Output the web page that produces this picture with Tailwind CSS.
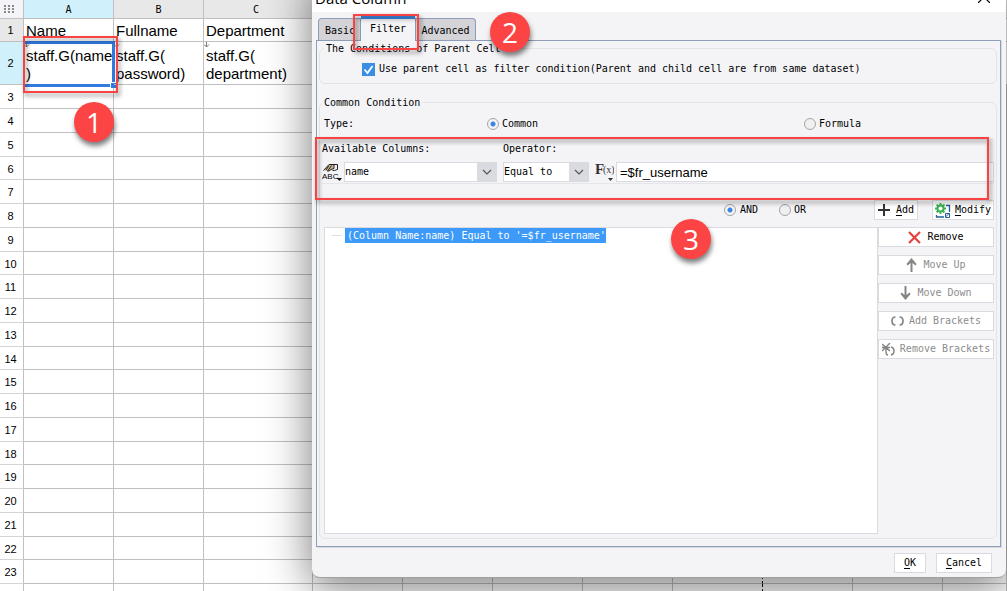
<!DOCTYPE html>
<html lang="en">
<head>
<meta charset="utf-8">
<title>Data Column</title>
<script src="https://cdn.jsdelivr.net/npm/@tailwindcss/browser@4"></script>
</head>
<body class="relative h-screen overflow-hidden bg-white text-black font-['DejaVu_Sans_Mono',monospace] text-[10px] leading-[14px]">

<!-- Spreadsheet -->
<table class="w-full table-fixed border-separate border-spacing-0">
  <colgroup>
    <col class="w-6"><col class="w-[90px]"><col class="w-[90px]"><col class="w-[109px]">
    <col class="w-[90px]"><col class="w-[90px]"><col class="w-[90px]"><col class="w-[90px]"><col class="w-[90px]"><col class="w-[90px]"><col class="w-[90px]"><col>
  </colgroup>
  <thead>
    <tr class="h-[19px] bg-[#e8e8e8]">
      <td class="border-r border-b border-[#c0c0c0] bg-[#f4f4f8] p-0">
        <svg class="ml-1 block" width="11" height="9" fill="#8a8a8a"><path d="M0 0h2v2H0zM4 0h2v2H4zM8 0h2v2H8zM0 3h2v2H0zM4 3h2v2H4zM8 3h2v2H8zM0 6h2v2H0zM4 6h2v2H4zM8 6h2v2H8z"/></svg>
      </td>
      <th class="border-r border-b border-[#c0c0c0] bg-[#d0f0fb] p-0 pt-0.5 font-normal">A</th>
      <th class="border-r border-b border-[#c0c0c0] p-0 pt-0.5 font-normal">B</th>
      <th class="border-r border-b border-[#c0c0c0] p-0 pt-0.5 pr-1 font-normal">C</th>
      <td colspan="8" class="border-b border-[#c0c0c0] p-0"></td>
    </tr>
  </thead>
  <tbody id="rows">
    <tr class="h-[23px] font-['Liberation_Sans',sans-serif] text-[15px] leading-[18px]">
      <th class="border-r border-b border-[#c0c0c0] bg-[#e8e8e8] p-0 pr-0.5 text-[11px] font-normal">1</th>
      <td class="border-r border-b border-[#c0c0c0] p-0 pt-0.5 pl-0.5">Name</td>
      <td class="border-r border-b border-[#c0c0c0] p-0 pt-0.5 pl-0.5">Fullname</td>
      <td class="border-r border-b border-[#c0c0c0] p-0 pt-0.5 pl-0.5">Department</td>
      <td colspan="8" class="border-b border-[#c0c0c0] p-0"></td>
    </tr>
    <tr class="h-[43px] font-['Liberation_Sans',sans-serif] text-[15px] leading-[18px]">
      <th class="border-r border-b border-[#c0c0c0] bg-[#d0f0fb] p-0 pr-0.5 text-[11px] font-normal">2</th>
      <td class="relative border-r border-b border-[#c0c0c0] p-0 pt-1 pl-0.5 whitespace-nowrap">staff.G(name<br>)
        <svg class="absolute top-0 left-0" width="6" height="6" fill="none" stroke="#777"><path d="M2.500 0v5M0 2.500l2.500 2.500l2.500-2.500"/></svg>
        <span class="absolute top-[-1px] -right-0.5 -bottom-[3px] left-0 border-y-[3px] border-r-[3px] border-[#2f7be0]"></span>
        <span class="absolute -right-[3px] -bottom-1 size-1.5 border-t border-l border-white bg-[#2f7be0]"></span>
      </td>
      <td class="relative border-r border-b border-[#c0c0c0] p-0 pt-1 pl-0.5">staff.G(<br>password)
        <svg class="absolute top-0 left-0" width="6" height="6" fill="none" stroke="#777"><path d="M2.500 0v5M0 2.500l2.500 2.500l2.500-2.500"/></svg>
      </td>
      <td class="relative border-r border-b border-[#c0c0c0] p-0 pt-1 pl-0.5">staff.G(<br>department)
        <svg class="absolute top-0 left-0" width="6" height="6" fill="none" stroke="#777"><path d="M2.500 0v5M0 2.500l2.500 2.500l2.500-2.500"/></svg>
      </td>
      <td colspan="8" class="border-b border-[#c0c0c0] p-0"></td>
    </tr>
  </tbody>
</table>

<!-- Data column dialog -->
<section role="dialog" aria-label="Data Column" class="absolute top-[-24px] right-px left-[312px] rounded-lg border-b border-[#a0a0a0] bg-[#f4f4f7] shadow-[0_8px_44px_2px_rgba(0,0,0,0.5)]">
  <header class="flex h-9 items-center justify-between rounded-t-lg bg-white pt-2 pr-4 pl-[3px]">
    <h1 class="font-['Open_Sans',sans-serif] text-[15px] leading-5">Data Column</h1>
    <button aria-label="Close" class="pb-0.5"><svg class="block" width="12" height="12" stroke="#111" stroke-width="1.300"><path d="M0 0l12 12M12 0L0 12"/></svg></button>
  </header>

  <nav role="tablist" class="flex items-end pt-1 pl-1.5">
    <button role="tab" class="h-[22px] w-[43px] rounded-tl-sm border border-b-0 border-[#8e9db8] bg-[#d3d3d8] pt-0.5 pl-1.5 text-left">Basic</button>
    <button role="tab" aria-selected="true" class="relative -mb-px h-[25px] w-[54px] border-t-[3px] border-[#3b86dd] bg-[#f4f4f7] pb-0.5">Filter</button>
    <button role="tab" class="h-[22px] w-[61px] rounded-tr-sm border border-b-0 border-[#8e9db8] bg-[#d3d3d8] pt-0.5">Advanced</button>
  </nav>

  <div class="mr-[5px] ml-1 border border-[#8e9db8] pr-[3px] pb-[7px] pl-0.5 shadow-[1px_1px_0_#d5d9e2]">
    <fieldset class="rounded-md border border-[#e4e4e8]">
      <legend class="ml-1 px-0.5 pt-px leading-[13px]">The Conditions of Parent Cell</legend>
      <label class="flex h-7 items-center gap-1 pl-[42px]">
        <span class="grid">
          <input type="checkbox" checked class="col-start-1 row-start-1 size-[13px] appearance-none bg-[#3a8ee6]">
          <svg class="pointer-events-none col-start-1 row-start-1" width="13" height="13" fill="none" stroke="#fff" stroke-width="1.800"><path d="M2.500 6.500l3 3.500l5-7"/></svg>
        </span>
        Use parent cell as filter condition(Parent and child cell are from same dataset)
      </label>
    </fieldset>

    <fieldset class="mt-[11px] rounded-md border border-[#e4e4e8] px-0.5 pb-1">
      <legend class="px-0.5 pt-px leading-[13px]">Common Condition</legend>
      <div class="mb-px grid h-[29px] grid-cols-[163px_317px_auto] items-center pl-0.5">
        <span>Type:</span>
        <label class="flex items-center gap-[3px]"><input type="radio" name="type" checked class="size-3 appearance-none rounded-full border border-[#a5a5a5] bg-[radial-gradient(circle,#3a86dc_0_2px,#f4f4f7_3px)]">Common</label>
        <label class="flex items-center gap-[3px]"><input type="radio" name="type" class="size-3 appearance-none rounded-full border border-[#a5a5a5] bg-[#f0f0f0]">Formula</label>
      </div>

      <div class="flex items-end gap-1.5 border-y border-[#e6e6ea] pb-px">
        <div class="w-[175px]">
          <label for="col" class="mb-[5px] block h-[17px] leading-[17px]">Available Columns:</label>
          <div class="flex items-center gap-[3px]">
            <button aria-label="Choose field type" class="w-[19px]">
              <svg class="block" width="20" height="20" viewBox="0 0 20 20">
                <path d="M2 8.500L7 3.500l5-1v4l-3 1l-2 1.500z" fill="#cdb48e"/>
                <path d="M1.500 8.500L7 2.500h8.500v5l-3 1h-2M7 3.500L4 8M9.500 3.500L6 8.500M12 2.500v4l-3 1l-2 1.500H5" fill="none" stroke="#222"/>
                <text x="0" y="17" font-family="Liberation Sans, sans-serif" font-size="8">ABC</text>
                <path d="M14.500 16h5.500l-2.500 3z" fill="#111"/>
              </svg>
            </button>
            <div class="relative h-5 flex-1">
              <select id="col" class="h-5 w-full appearance-none border border-[#dadbe0] bg-white p-0 pr-5"><option>name</option></select>
              <svg class="pointer-events-none absolute top-0 right-0 bg-[#dadbe0]" width="20" height="20" fill="none" stroke="#555" stroke-width="1.200"><path d="M6 8l4 4l4-4"/></svg>
            </div>
          </div>
        </div>
        <div class="w-[86px]">
          <label for="op" class="mb-[5px] block h-[17px] leading-[17px]">Operator:</label>
          <div class="relative h-5">
            <select id="op" class="h-5 w-full appearance-none border border-[#dadbe0] bg-white p-0 pr-5"><option>Equal to</option></select>
            <svg class="pointer-events-none absolute top-0 right-0 bg-[#dadbe0]" width="20" height="20" fill="none" stroke="#555" stroke-width="1.200"><path d="M6 8l4 4l4-4"/></svg>
          </div>
        </div>
        <div class="flex flex-1 items-center gap-0.5">
          <button aria-label="Formula editor" class="w-[19px]">
            <svg class="block" width="19" height="20" fill="#333">
              <text x="0" y="12" font-family="Liberation Serif, serif" font-size="15" font-weight="bold">F</text>
              <text x="8" y="11" font-family="Liberation Serif, serif" font-size="10">(x)</text>
              <path d="M13 16h5l-2.500 3z"/>
            </svg>
          </button>
          <input aria-label="Value" value="=$fr_username" class="h-5 min-w-0 flex-1 border border-[#dadbe0] bg-white px-[3px] font-['Liberation_Sans',sans-serif] text-[13px]">
        </div>
      </div>

      <div class="mt-4 flex h-5 items-center justify-end">
        <label class="flex items-center gap-1"><input type="radio" name="join" checked class="size-3 appearance-none rounded-full border border-[#a5a5a5] bg-[radial-gradient(circle,#3a86dc_0_2px,#f4f4f7_3px)]">AND</label>
        <label class="ml-[21px] flex items-center gap-[3px]"><input type="radio" name="join" class="size-3 appearance-none rounded-full border border-[#a5a5a5] bg-[#f0f0f0]">OR</label>
        <button class="ml-[68px] flex h-5 w-11 items-center justify-center gap-1.5 border border-[#dadbe0] bg-white">
          <svg width="12" height="12" stroke="#333" stroke-width="2"><path d="M6 0v12M0 6h12"/></svg><span><u class="underline-offset-2">A</u>dd</span>
        </button>
        <button class="ml-3.5 flex h-5 w-[62px] items-center justify-center gap-1 border border-[#dadbe0] bg-white">
          <svg width="16" height="15" fill="none">
            <circle cx="5.500" cy="5.500" r="3" stroke="#3ab04f" stroke-width="2"/>
            <path d="M5.500 0v2M5.500 9v2M0 5.500h2M9 5.500h2M1.600 1.600l1.500 1.500M8 8l1.500 1.500M1.600 9.400L3 8M8 3l1.500-1.500" stroke="#3ab04f" stroke-width="1.800"/>
            <path d="M11 2.500h3.500V9M1.500 12v2H9" stroke="#1d5f99" stroke-width="1.300"/>
            <path d="M10.500 10.500h4v4h-4zM10.500 14l4-4" stroke="#1d5f99"/>
          </svg><span><u class="underline-offset-2">M</u>odify</span>
        </button>
      </div>

      <div class="mt-[7px] flex">
        <ul class="ml-0.5 min-h-[307px] flex-1 border border-[#dadbe0] bg-white pl-[7px]">
          <li class="flex items-center gap-[3px]"><span class="w-2.5 border-t border-[#e0e0e0]"></span><span class="h-[15px] bg-[#3d9af8] pl-0.5 leading-[15px] text-white">(Column Name:name) Equal to '=$fr_username'</span></li>
        </ul>
        <div class="flex w-[116px] flex-col gap-2">
          <button class="flex h-5 items-center justify-center gap-1.5 border border-[#dadbe0] bg-white"><svg width="13" height="13" stroke="#e5433c" stroke-width="2.200"><path d="M1 1l11 11M12 1L1 12"/></svg>Remove</button>
          <button disabled class="flex h-5 items-center justify-center gap-1.5 border border-[#dadbe0] bg-white text-[#8c8c8c]"><svg width="11" height="14" fill="#858585"><path d="M4.500 14V5L1.500 7.500L.5 6L5.500 0l5 6l-1 1.500L6.500 5v9z"/></svg>Move Up</button>
          <button disabled class="flex h-5 items-center justify-center gap-1.5 border border-[#dadbe0] bg-white text-[#8c8c8c]"><svg width="11" height="14" fill="#858585"><path d="M4.500 0v9L1.500 6.500L.5 8l5 6l5-6l-1-1.500L6.500 9V0z"/></svg>Move Down</button>
          <button disabled class="flex h-5 items-center justify-center gap-[5px] border border-[#dadbe0] bg-white text-[#8c8c8c]"><svg width="13" height="10" fill="none" stroke="#858585" stroke-width="1.700"><path d="M4.500 1Q1 1 1 5t3.500 4M8.500 1Q12 1 12 5T8.500 9"/></svg>Add Brackets</button>
          <button disabled class="flex h-5 items-center justify-center gap-[5px] border border-[#dadbe0] bg-white text-[#8c8c8c]"><svg width="13" height="13" fill="none" stroke="#858585" stroke-width="1.400"><path d="M0 1l8 7M8 0L0 8M0 4.500h8M4 4v5q0 3 2 3M9 4q3 .5 3 4t-3 4"/></svg>Remove Brackets</button>
        </div>
      </div>
    </fieldset>
  </div>

  <footer class="flex justify-end gap-2.5 pt-1.5 pr-3.5 pb-1">
    <button class="h-5 w-8 border border-[#dadbe0] bg-white"><u class="underline-offset-2">O</u>K</button>
    <button class="h-5 w-14 border border-[#dadbe0] bg-white"><u class="underline-offset-2">C</u>ancel</button>
  </footer>
</section>

<!-- Step annotations -->
<div class="pointer-events-none font-['Open_Sans',sans-serif] text-[28px] leading-10 text-white">
  <div class="absolute top-9 left-[23px] h-[57px] w-[95px] border-2 border-[#f84343] drop-shadow-[2px_3px_2px_rgba(0,0,0,0.45)]"></div>
  <div class="absolute top-3.5 left-[353px] h-9 w-[66px] border-2 border-[#f84343] drop-shadow-[2px_3px_2px_rgba(0,0,0,0.45)]"></div>
  <div class="absolute top-[137px] right-[18px] left-[315px] h-[63px] border-2 border-[#f84343] drop-shadow-[2px_3px_2px_rgba(0,0,0,0.45)]"></div>
  <div class="absolute top-[102px] left-[74px] size-10 rounded-full bg-[#fc4444] text-center shadow-[1px_4px_5px_rgba(0,0,0,0.5)]">1</div>
  <div class="absolute top-3 left-[490px] size-10 rounded-full bg-[#fc4444] text-center shadow-[1px_4px_5px_rgba(0,0,0,0.5)]">2</div>
  <div class="absolute top-[219px] left-[671px] size-10 rounded-full bg-[#fc4444] text-center shadow-[1px_4px_5px_rgba(0,0,0,0.5)]">3</div>
</div>

<script>
  // Empty rows below the data; every fourth is a pixel shorter, one column edge carries the dashed page break
  const rows = document.getElementById('rows');
  for (let n = 3; n <= 24; n++) {
    const tr = document.createElement('tr');
    tr.className = n % 4 === 2 ? 'h-[23px]' : 'h-6';
    tr.innerHTML = `<th class="border-r border-b border-r-[#c0c0c0] border-b-[#d4d4d4] p-0 pt-px pr-0.5 font-['Liberation_Sans',sans-serif] text-[11px] font-normal">${n < 24 ? n : ''}</th>`;
    for (let c = 0; c < 11; c++) {
      const td = document.createElement('td');
      td.className = c === 7
        ? 'border-r border-b border-r-black border-b-[#c0c0c0] [border-right-style:dashed] p-0'
        : 'border-r border-b border-[#c0c0c0] p-0';
      tr.appendChild(td);
    }
    rows.appendChild(tr);
  }
</script>
</body>
</html>
